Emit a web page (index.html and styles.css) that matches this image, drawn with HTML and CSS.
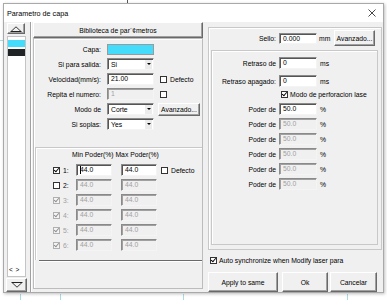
FILE: index.html
```html
<!DOCTYPE html>
<html lang="es">
<head>
    <meta charset="UTF-8">
    <meta name="viewport" content="width=device-width, initial-scale=1.0">
    <title>Parametro de capa</title>
    <link rel="stylesheet" href="styles.css">
</head>
<body>
    <div class="window">
        <div class="titlebar">
            <span>Parametro de capa</span>
            <svg class="close" width="8" height="8" viewBox="0 0 8 8"><path d="M0.5 0.5L7.5 7.5M7.5 0.5L0.5 7.5" stroke="#333" stroke-width="0.9"/></svg>
        </div>

        <div class="content">
            <!-- lista de capas -->
            <div class="layers">
                <div class="btn arrow-btn up">
                    <svg width="12" height="6" viewBox="0 0 12 6"><path d="M1 5.5L6 0.8L11 5.5Z" fill="none" stroke="#222" stroke-width="0.9"/><path d="M0.5 5.5H11.5" stroke="#222"/></svg>
                </div>
                <div class="layer-list">
                    <div class="layer cyan"></div>
                    <div class="layer dark"></div>
                    <div class="hscroll">&lt; &gt;</div>
                </div>
                <div class="btn arrow-btn down">
                    <svg width="12" height="6" viewBox="0 0 12 6"><path d="M1 0.5L6 5.2L11 0.5Z" fill="none" stroke="#222" stroke-width="0.9"/><path d="M0.5 0.5H11.5" stroke="#222"/></svg>
                </div>
            </div>

            <div class="sep"></div>

            <div class="left-panel">
                <div class="btn lib-btn">Biblioteca de par¨¢metros</div>
                <div class="left-box">
                    <div class="form">
                        <span class="lbl">Capa:</span>
                        <div class="color-box"></div>
                        <span></span>

                        <span class="lbl">Si para salida:</span>
                        <div class="select"><span>Si</span><i class="drop"></i></div>
                        <span></span>

                        <span class="lbl">Velocidad(mm/s):</span>
                        <div class="input">21.00</div>
                        <span class="check-line"><span class="cb"></span>Defecto</span>

                        <span class="lbl">Repita el numero:</span>
                        <div class="input disabled">1</div>
                        <span class="check-line"><span class="cb"></span></span>

                        <span class="lbl">Modo de</span>
                        <div class="select"><span>Corte</span><i class="drop"></i></div>
                        <div class="btn small-btn adv-left">Avanzado...</div>

                        <span class="lbl">Si soplas:</span>
                        <div class="select"><span>Yes</span><i class="drop"></i></div>
                        <span></span>
                    </div>

                    <div class="power-group">
                        <div class="power-head">Min Poder(%) Max Poder(%)</div>
                        <div class="power-grid">
                            <span class="cb checked"></span><span>1:</span>
                            <div class="input pw"><i class="caret"></i>44.0</div>
                            <div class="input pw">44.0</div>
                            <span class="check-line"><span class="cb"></span>Defecto</span>

                            <span class="cb"></span><span>2:</span>
                            <div class="input pw disabled">44.0</div>
                            <div class="input pw disabled">44.0</div>
                            <span></span>

                            <span class="cb checked off"></span><span class="grey">3:</span>
                            <div class="input pw disabled">44.0</div>
                            <div class="input pw disabled">44.0</div>
                            <span></span>

                            <span class="cb checked off"></span><span class="grey">4:</span>
                            <div class="input pw disabled">44.0</div>
                            <div class="input pw disabled">44.0</div>
                            <span></span>

                            <span class="cb checked off"></span><span class="grey">5:</span>
                            <div class="input pw disabled">44.0</div>
                            <div class="input pw disabled">44.0</div>
                            <span></span>

                            <span class="cb checked off"></span><span class="grey">6:</span>
                            <div class="input pw disabled">44.0</div>
                            <div class="input pw disabled">44.0</div>
                            <span></span>
                        </div>
                        <div class="power-rule"></div>
                    </div>
                </div>
            </div>

            <div class="right-panel">
                <div class="right-box">
                    <div class="sello-row">
                        <span class="lbl sello-lbl">Sello:</span>
                        <div class="input num">0.000</div>
                        <span class="unit mm">mm</span>
                        <div class="btn small-btn adv-right">Avanzado...</div>
                    </div>

                    <div class="inner-box">
                        <div class="row first">
                            <span class="lbl">Retraso de</span>
                            <div class="input num">0</div>
                            <span class="unit">ms</span>
                        </div>
                        <div class="row second">
                            <span class="lbl">Retraso apagado:</span>
                            <div class="input num">0</div>
                            <span class="unit">ms</span>
                        </div>
                        <div class="row perf">
                            <span class="cb checked"></span>Modo de perforacion lase
                        </div>
                        <div class="row poder">
                            <span class="lbl">Poder de</span>
                            <div class="input num">50.0</div>
                            <span class="unit">%</span>
                        </div>
                        <div class="row poder">
                            <span class="lbl">Poder de</span>
                            <div class="input num disabled">50.0</div>
                            <span class="unit">%</span>
                        </div>
                        <div class="row poder">
                            <span class="lbl">Poder de</span>
                            <div class="input num disabled">50.0</div>
                            <span class="unit">%</span>
                        </div>
                        <div class="row poder">
                            <span class="lbl">Poder de</span>
                            <div class="input num disabled">50.0</div>
                            <span class="unit">%</span>
                        </div>
                        <div class="row poder">
                            <span class="lbl">Poder de</span>
                            <div class="input num disabled">50.0</div>
                            <span class="unit">%</span>
                        </div>
                        <div class="row poder">
                            <span class="lbl">Poder de</span>
                            <div class="input num disabled">50.0</div>
                            <span class="unit">%</span>
                        </div>
                    </div>
                </div>

                <div class="sync">
                    <span class="cb checked"></span>Auto synchronize when Modify laser para
                </div>

                <div class="actions">
                    <div class="btn act apply">Apply to same</div>
                    <div class="btn act ok">Ok</div>
                    <div class="btn act cancel">Cancelar</div>
                </div>
            </div>
        </div>
    </div>
</body>
</html>
```

FILE: styles.css
```css
* {
    box-sizing: border-box;
}

body {
    margin: 0;
    width: 387px;
    height: 300px;
    overflow: hidden;
    font-family: 'Liberation Sans', Arial, sans-serif;
    font-size: 6.8px;
    color: #000;
    background:
        linear-gradient(#555, #555) 127px 0 / 1px 3px no-repeat,
        linear-gradient(#a8dde6, #a8dde6) 0 40px / 3px 1px no-repeat,
        linear-gradient(#a8dde6, #a8dde6) 20px 294px / 1px 6px no-repeat,
        linear-gradient(#a8dde6, #a8dde6) 60px 294px / 1px 6px no-repeat,
        linear-gradient(#a8dde6, #a8dde6) 183px 294px / 1px 6px no-repeat,
        linear-gradient(#a8dde6, #a8dde6) 347px 294px / 1px 6px no-repeat,
        #fff;
}

.window {
    margin: 3px 0 0 3px;
    width: 381px;
    height: 290px;
    background: #f0f0f0;
    border: 1px solid #a9a9a9;
    box-shadow: 1px 1px 3px rgba(0, 0, 0, 0.25);
    display: flex;
    flex-direction: column;
}

.titlebar {
    height: 18px;
    background: #fff;
    display: flex;
    align-items: center;
    justify-content: space-between;
    padding: 0 7px 0 3px;
    font-size: 7.2px;
}

.content {
    flex: 1;
    display: flex;
    min-height: 0;
}

/* botones estilo windows */
.btn {
    background: #f0f0f0;
    border: 1px solid;
    border-color: #fff #696969 #696969 #fff;
    box-shadow: inset -1px -1px 0 #a0a0a0;
    display: flex;
    align-items: center;
    justify-content: center;
    white-space: nowrap;
}

.input {
    height: 12px;
    background: #fff;
    border: 1px solid;
    border-color: #8a8a8a #f4f4f4 #f4f4f4 #8a8a8a;
    box-shadow: inset 1px 1px 0 #555;
    padding: 0 0 0 3px;
    line-height: 10px;
    white-space: nowrap;
    overflow: hidden;
}

.input.disabled {
    background: #f0f0f0;
    color: #a0a0a0;
    box-shadow: inset 1px 1px 0 #a0a0a0;
}

.select {
    height: 12px;
    background: #fff;
    border: 1px solid;
    border-color: #8a8a8a #f4f4f4 #f4f4f4 #8a8a8a;
    box-shadow: inset 1px 1px 0 #555;
    display: flex;
    align-items: center;
    padding: 1px 1px 0 3px;
}

.select span {
    flex: 1;
}

.drop {
    width: 7px;
    height: 9px;
    background: #ececec;
    position: relative;
}

.drop::after {
    content: "";
    position: absolute;
    left: 1.5px;
    top: 3px;
    border-left: 2px solid transparent;
    border-right: 2px solid transparent;
    border-top: 2.5px solid #000;
}

.cb {
    display: inline-block;
    width: 7px;
    height: 7px;
    background: #fff;
    border: 1px solid #333;
    position: relative;
    flex: none;
}

.cb.checked::after {
    content: "";
    position: absolute;
    left: 1.4px;
    top: -0.2px;
    width: 2px;
    height: 3.8px;
    border: solid #000;
    border-width: 0 1.2px 1.2px 0;
    transform: rotate(40deg);
}

.cb.off {
    border-color: #b0b0b0;
    background: #f4f4f4;
}

.cb.off::after {
    border-color: #8c8c8c;
}

.grey {
    color: #a0a0a0;
}

.check-line {
    display: flex;
    align-items: center;
    gap: 3px;
    white-space: nowrap;
}

.lbl {
    text-align: right;
    white-space: nowrap;
}

/* columna de capas */
.layers {
    width: 24px;
    padding-left: 2px;
    display: flex;
    flex-direction: column;
}

.arrow-btn {
    height: 11px;
    width: 18px;
    margin: 1px 0 0 1px;
}

.arrow-btn.down {
    height: 14px;
    width: 21px;
    margin: 1px 0 0 0;
}

.layer-list {
    flex: 1;
    margin: 2px 0 0 1px;
    width: 19px;
    background: #fff;
    border: 1px solid #c4c4c4;
    padding-top: 3px;
    display: flex;
    flex-direction: column;
}

.layer {
    height: 7px;
}

.layer.cyan {
    background: #44dcfa;
}

.layer.dark {
    margin-top: 2px;
    background: #1f2326;
}

.hscroll {
    margin-top: auto;
    padding: 0 0 3px 1px;
    font-size: 6.5px;
    letter-spacing: 0.5px;
}

.sep {
    width: 2px;
    margin: 0 1px 0 2px;
    border-left: 1px solid #a0a0a0;
    border-right: 1px solid #fff;
}

/* panel izquierdo */
.left-panel {
    width: 171px;
    display: flex;
    flex-direction: column;
}

.lib-btn {
    height: 16px;
    width: 170px;
}

.left-box {
    flex: 1;
    width: 170px;
    margin-bottom: 3px;
    border: 1px solid #bcbcbc;
    box-shadow: inset 1px 1px 0 #fff;
    padding-top: 4px;
}

.form {
    display: grid;
    grid-template-columns: 67px 47px auto;
    grid-auto-rows: 12px;
    column-gap: 6px;
    row-gap: 3px;
    align-items: center;
}

.color-box {
    height: 11px;
    background: #44dcfa;
    border: 1px solid #9a9a9a;
}

.small-btn {
    height: 13px;
    padding: 0 2px;
}

.adv-left {
    width: 42px;
    margin-left: -2px;
}

.power-group {
    margin: 17px 0 0 1px;
    height: 113px;
    border-top: 1px solid #c8c8c8;
    border-left: 1px solid #c8c8c8;
    box-shadow: inset 1px 1px 0 #fff;
}

.power-head {
    margin-top: 2px;
    padding-left: 36px;
    line-height: 9px;
}

.power-grid {
    margin-top: 5px;
    padding-left: 17px;
    display: grid;
    grid-template-columns: 10px 13px 45px 40px auto;
    grid-auto-rows: 12px;
    row-gap: 3px;
    align-items: center;
}

.input.pw {
    width: 36px;
    position: relative;
}

.caret {
    position: absolute;
    left: 3px;
    top: 1px;
    width: 1px;
    height: 8px;
    background: #000;
}

.power-rule {
    margin: 9px 0 0 3px;
    height: 2px;
    border-top: 1px solid #6a6a6a;
    border-bottom: 1px solid #fff;
}

/* panel derecho */
.right-panel {
    width: 179px;
    display: flex;
    flex-direction: column;
}

.right-box {
    margin: 5px 0 0 4px;
    width: 174px;
    height: 223px;
    border: 1px solid #c8c8c8;
    box-shadow: inset 1px 1px 0 #fff;
}

.sello-row {
    margin-top: 2px;
    height: 16px;
    display: flex;
    align-items: center;
}

.sello-lbl {
    width: 67px;
}

.input.num {
    width: 38px;
    height: 11px;
    margin-left: 3px;
}

.unit {
    margin-left: 3px;
}

.unit.mm {
    width: 13px;
    margin-left: 2px;
}

.adv-right {
    width: 41px;
    height: 16px;
    margin-left: 2px;
}

.inner-box {
    margin: 4px 0 0 2px;
    width: 167px;
    height: 195px;
    border: 1px solid #c8c8c8;
    box-shadow: inset 1px 1px 0 #fff;
    padding-top: 6px;
}

.row {
    display: flex;
    align-items: center;
    height: 12px;
}

.row .lbl {
    width: 64px;
}

.row .input.num {
    height: 12px;
}

.row.second {
    margin-top: 6px;
}

.row.perf {
    margin-top: 2px;
    height: 10px;
    padding-left: 69px;
    gap: 2px;
    white-space: nowrap;
}

.row.poder {
    margin-top: 3px;
}

.row.perf + .row.poder {
    margin-top: 4px;
}

.sync {
    margin: 5px 0 0 6px;
    height: 10px;
    display: flex;
    align-items: center;
    gap: 2px;
}

.actions {
    margin: 7px 0 0 4px;
    display: flex;
}

.act {
    height: 20px;
}

.apply {
    width: 70px;
}

.ok {
    width: 46px;
    margin-left: 4px;
}

.cancel {
    width: 47px;
    margin-left: 2px;
}
```
